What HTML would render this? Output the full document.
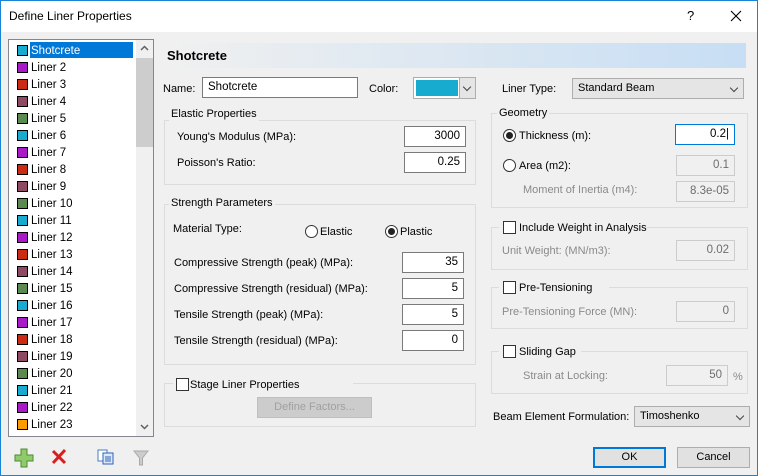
<!DOCTYPE html>
<html><head><style>
*{box-sizing:border-box;margin:0;padding:0}
body{width:758px;height:476px;overflow:hidden;font-family:"Liberation Sans",sans-serif;font-size:11px;color:#000;background:#f0f0f0}
.win{position:absolute;left:0;top:0;width:758px;height:476px;border:1px solid #1883d7;background:#f0f0f0}
.tb{position:absolute;left:0;top:0;width:756px;height:31px;background:#fff}
.a{position:absolute;white-space:nowrap}
.in{position:absolute;background:#fff;border:1px solid #7a7a7a;text-align:right;padding-right:5px;line-height:18px;font-size:11.5px}
.dis{background:#f0f0f0;border-color:#ccc;color:#6d6d6d}
.grp{position:absolute;border:1px solid #dcdcdc}
.gt{position:absolute;background:#f0f0f0;padding:0 2px;line-height:14px}
.g{color:#8a8a8a}
.rad{position:absolute;width:13px;height:13px;border:1px solid #333;border-radius:50%;background:#fff}
.rad.on::after{content:"";position:absolute;left:2px;top:2px;width:7px;height:7px;border-radius:50%;background:#222}
.cb{position:absolute;width:13px;height:13px;border:1px solid #333;background:#fff}
.combo{position:absolute;background:#e5e5e5;border:1px solid #adadad;line-height:18px;padding-left:5px}
.chev{position:absolute;right:6px;top:6px;width:6px;height:6px;border-right:1px solid #444;border-bottom:1px solid #444;transform:rotate(45deg)}
.sw{position:absolute;left:8px;width:11px;height:11px;border:1px solid #000}
.it{position:absolute;left:22px;line-height:16px;font-size:11.5px}
.btn{position:absolute;background:#e1e1e1;border:1px solid #adadad;text-align:center;line-height:18px}
</style></head><body>
<div class="win">
<div class="tb"></div>
<div class="a" style="left:8px;top:8px;font-size:12px">Define Liner Properties</div>
<div class="a" style="left:686px;top:7px;font-size:13px">?</div>
<svg class="a" style="left:729px;top:9px" width="12" height="12"><path d="M1 1L11 11M11 1L1 11" stroke="#000" stroke-width="1.1"/></svg>

<div class="a" style="left:7px;top:38px;width:146px;height:398px;background:#fff;border:1px solid #828790">
<div class="a" style="left:21px;top:2px;width:103px;height:16px;background:#0078d7"></div>
<div class="a" style="left:127px;top:0;width:17px;height:396px;background:#f0f0f0"></div>
<div class="a" style="left:127px;top:18px;width:17px;height:89px;background:#cdcdcd"></div>
<svg class="a" style="left:131px;top:5px" width="9" height="6"><path d="M1 5L4.5 1.5L8 5" stroke="#606060" stroke-width="1.5" fill="none"/></svg>
<svg class="a" style="left:131px;top:384px" width="9" height="6"><path d="M1 1L4.5 4.5L8 1" stroke="#606060" stroke-width="1.5" fill="none"/></svg>
<div id="L"></div>
</div>
<script>
var c=["#17abcf","#a919c7","#cc2b13","#8e4a62","#5b8a50"],h="";
for(var i=1;i<=23;i++){var y=3+(i-1)*17;var col=i==23?"#fd9c00":c[(i-1)%5];
h+='<div class="sw" style="top:'+(y+2)+'px;background:'+col+'"></div><div class="it" style="top:'+y+'px;'+(i==1?'color:#fff':'')+'">'+(i==1?'Shotcrete':'Liner '+i)+'</div>';}
document.getElementById("L").innerHTML=h;
</script>

<svg class="a" style="left:13px;top:447px" width="20" height="20"><path d="M7 1H13V7H19V13H13V19H7V13H1V7H7Z" fill="#8fcb6a" stroke="#4e8a31"/></svg>
<svg class="a" style="left:49px;top:447px" width="18" height="18"><path d="M3 3L15 15M15 2L3 15" stroke="#d62020" stroke-width="3"/></svg>
<svg class="a" style="left:96px;top:448px" width="18" height="16"><rect x="1" y="1" width="9" height="11" fill="#fff" stroke="#4a7cc0"/><rect x="6" y="4" width="10" height="11" fill="#dce9fb" stroke="#2e62b5"/><path d="M8 8H14M8 10H14M8 12H14" stroke="#2e62b5"/></svg>
<svg class="a" style="left:132px;top:449px" width="16" height="16"><path d="M1 1H15L9.5 8V15H6.5V8Z" fill="#ccc" stroke="#a8a8a8"/></svg>

<div class="a" style="left:162px;top:42px;width:583px;height:25px;background:linear-gradient(to right,#f0f0f0,#c7def4)"></div>
<div class="a" style="left:166px;top:47px;font-weight:bold;font-size:13px">Shotcrete</div>

<div class="a" style="left:162px;top:82px">Name:</div>
<div class="in" style="left:201px;top:76px;width:156px;height:21px;text-align:left;padding-left:5px">Shotcrete</div>
<div class="a" style="left:368px;top:82px">Color:</div>
<div class="a" style="left:412px;top:76px;width:63px;height:22px;border:1px solid #adadad;background:#fff"><div class="a" style="left:2px;top:2px;width:42px;height:16px;background:#17abcf"></div><div class="a" style="left:45px;top:0;width:16px;height:20px;background:#e5e5e5;border-left:1px solid #adadad"><div class="chev" style="right:5px"></div></div></div>

<div class="a" style="left:501px;top:82px">Liner Type:</div>
<div class="combo" style="left:571px;top:77px;width:172px;height:21px">Standard Beam<div class="chev"></div></div>

<div class="grp" style="left:163px;top:119px;width:312px;height:65px"></div>
<div class="gt" style="left:168px;top:106px">Elastic Properties</div>
<div class="a" style="left:176px;top:130px">Young's Modulus (MPa):</div>
<div class="in" style="left:403px;top:125px;width:62px;height:21px">3000</div>
<div class="a" style="left:176px;top:156px">Poisson's Ratio:</div>
<div class="in" style="left:403px;top:151px;width:62px;height:21px">0.25</div>

<div class="grp" style="left:163px;top:203px;width:312px;height:161px"></div>
<div class="gt" style="left:168px;top:195px">Strength Parameters</div>
<div class="a" style="left:172px;top:222px">Material Type:</div>
<div class="rad" style="left:304px;top:224px"></div><div class="a" style="left:319px;top:225px">Elastic</div>
<div class="rad on" style="left:384px;top:224px"></div><div class="a" style="left:399px;top:225px">Plastic</div>
<div class="a" style="left:173px;top:256px">Compressive Strength (peak) (MPa):</div>
<div class="in" style="left:401px;top:251px;width:62px;height:21px">35</div>
<div class="a" style="left:173px;top:282px">Compressive Strength (residual) (MPa):</div>
<div class="in" style="left:401px;top:277px;width:62px;height:21px">5</div>
<div class="a" style="left:173px;top:308px">Tensile Strength (peak) (MPa):</div>
<div class="in" style="left:401px;top:303px;width:62px;height:21px">5</div>
<div class="a" style="left:173px;top:334px">Tensile Strength (residual) (MPa):</div>
<div class="in" style="left:401px;top:329px;width:62px;height:21px">0</div>

<div class="grp" style="left:163px;top:382px;width:312px;height:44px"></div>
<div class="gt" style="left:172px;top:376px;width:180px;height:14px"></div>
<div class="cb" style="left:175px;top:377px"></div>
<div class="a" style="left:189px;top:378px">Stage Liner Properties</div>
<div class="btn g" style="left:256px;top:396px;width:115px;height:21px;background:#ccc;border-color:#bfbfbf;color:#a0a0a0">Define Factors...</div>

<div class="grp" style="left:490px;top:112px;width:257px;height:95px"></div>
<div class="gt" style="left:496px;top:105px">Geometry</div>
<div class="rad on" style="left:502px;top:128px"></div><div class="a" style="left:518px;top:129px">Thickness (m):</div>
<div class="in" style="left:674px;top:123px;width:60px;height:21px;border-color:#0078d7">0.2|</div>
<div class="rad" style="left:502px;top:158px"></div><div class="a" style="left:518px;top:159px">Area (m2):</div>
<div class="in dis" style="left:675px;top:154px;width:59px;height:21px">0.1</div>
<div class="a g" style="left:522px;top:183px">Moment of Inertia (m4):</div>
<div class="in dis" style="left:675px;top:180px;width:59px;height:21px">8.3e-05</div>

<div class="grp" style="left:490px;top:226px;width:257px;height:43px"></div>
<div class="gt" style="left:498px;top:219px;width:148px;height:14px"></div>
<div class="cb" style="left:502px;top:220px"></div>
<div class="a" style="left:518px;top:221px">Include Weight in Analysis</div>
<div class="a g" style="left:501px;top:244px">Unit Weight: (MN/m3):</div>
<div class="in dis" style="left:675px;top:239px;width:59px;height:21px">0.02</div>

<div class="grp" style="left:490px;top:286px;width:257px;height:42px"></div>
<div class="gt" style="left:498px;top:279px;width:110px;height:14px"></div>
<div class="cb" style="left:502px;top:280px"></div>
<div class="a" style="left:518px;top:281px">Pre-Tensioning</div>
<div class="a g" style="left:501px;top:305px">Pre-Tensioning Force (MN):</div>
<div class="in dis" style="left:675px;top:300px;width:59px;height:21px">0</div>

<div class="grp" style="left:490px;top:350px;width:257px;height:43px"></div>
<div class="gt" style="left:498px;top:343px;width:82px;height:14px"></div>
<div class="cb" style="left:502px;top:344px"></div>
<div class="a" style="left:518px;top:345px">Sliding Gap</div>
<div class="a g" style="left:522px;top:369px">Strain at Locking:</div>
<div class="in dis" style="left:665px;top:364px;width:62px;height:21px">50</div>
<div class="a g" style="left:732px;top:370px">%</div>

<div class="a" style="left:492px;top:410px">Beam Element Formulation:</div>
<div class="combo" style="left:633px;top:405px;width:116px;height:21px">Timoshenko<div class="chev"></div></div>

<div class="btn" style="left:592px;top:446px;width:73px;height:21px;border:2px solid #0078d7;line-height:17px">OK</div>
<div class="btn" style="left:676px;top:446px;width:73px;height:21px">Cancel</div>
</div>
</body></html>
